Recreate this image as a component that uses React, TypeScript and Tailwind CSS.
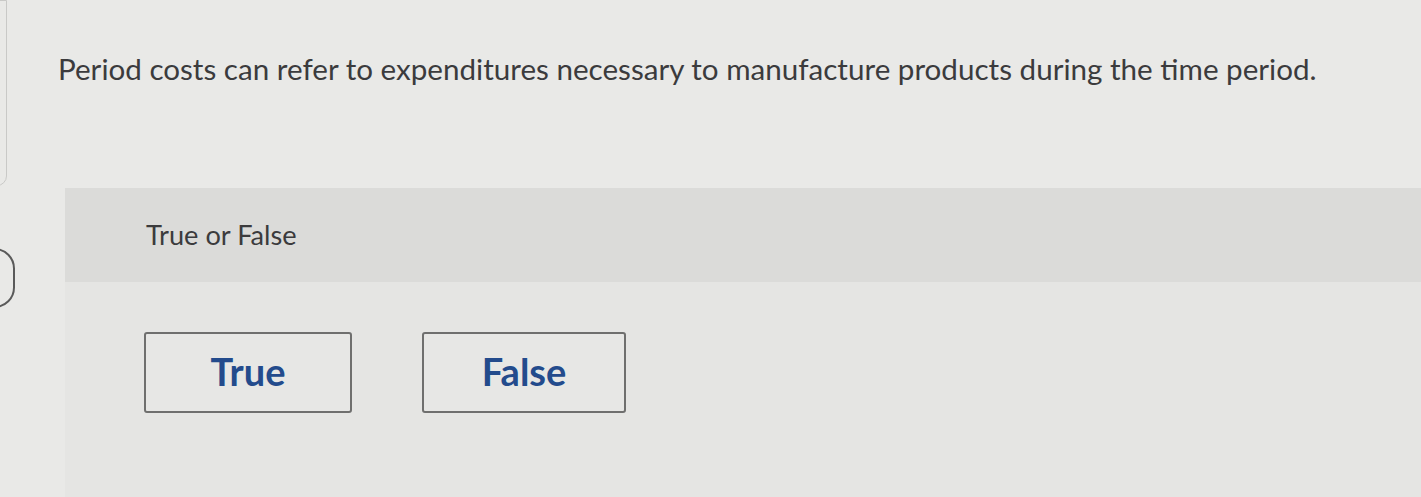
// True/False question card
const FONT = "font-['Lato','Liberation_Sans',sans-serif]";

function ChoiceButton({ label, width }: { label: string; width: string }) {
  return (
    <button
      type="button"
      className={`${width} h-[81px] rounded-[3px] border-2 border-[#6f6f6e] bg-[#e7e7e5] pb-[3px] text-[38px] font-bold text-[#234b8c]`}
    >
      {label}
    </button>
  );
}

export default function App() {
  return (
    <div className={`flex min-h-[497px] overflow-hidden bg-[#e9e9e7] ${FONT}`}>
      {/* clipped sidebar edge and nav dot */}
      <aside className="w-[58px] shrink-0 overflow-hidden">
        <div className="-ml-[40px] h-[186px] w-[47px] rounded-br-[10px] border border-[#c9c9c7]" />
        <div className="-ml-[26px] mt-[62px] h-[60px] w-[41px] rounded-full border-2 border-[#5a5a5a]" />
      </aside>

      <main className="flex flex-1 flex-col">
        <p className="pt-[51px] text-[29.6px] leading-[36px] text-[#3b3b3d]">
          Period costs can refer to expenditures necessary to manufacture products during the time period.
        </p>

        <section className="ml-[7px] mt-[101px] flex flex-1 flex-col bg-[#e5e5e3]">
          <div className="flex h-[94px] items-center bg-[#dbdbd9] pl-[81px]">
            <span className="text-[27.2px] text-[#3b3b3d]">True or False</span>
          </div>
          <div className="flex gap-[70px] pl-[79px] pt-[50px]">
            <ChoiceButton label="True" width="w-[208px]" />
            <ChoiceButton label="False" width="w-[204px]" />
          </div>
        </section>
      </main>
    </div>
  );
}
